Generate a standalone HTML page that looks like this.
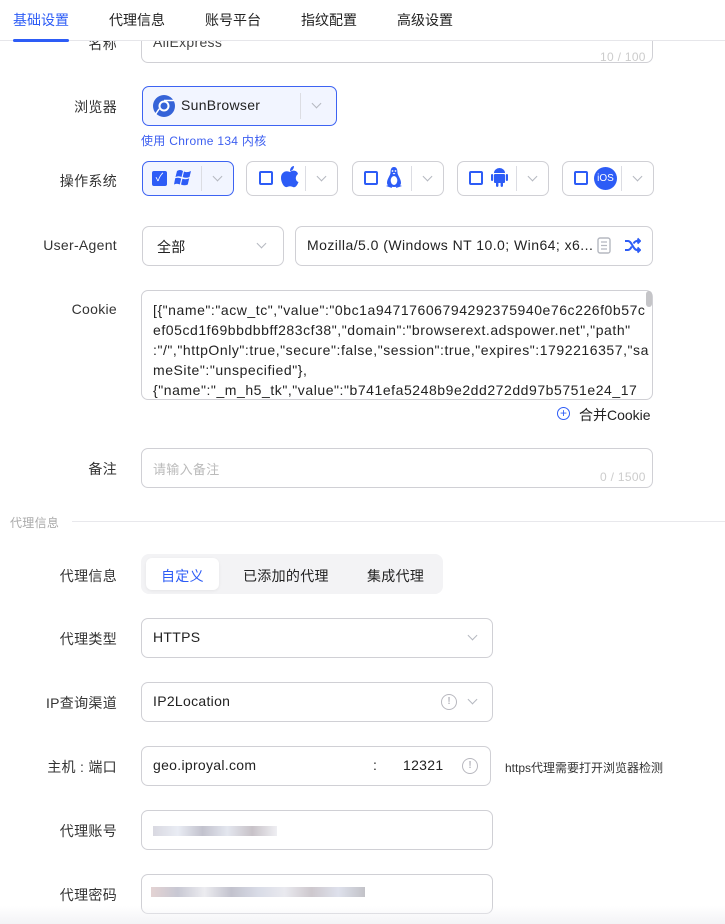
<!DOCTYPE html>
<html><head><meta charset="utf-8"><style>
*{box-sizing:border-box;margin:0;padding:0}
body{width:725px;height:924px;overflow:hidden;background:#fff;font-family:"Liberation Sans","Noto Sans CJK SC",sans-serif;font-size:14px;color:#222;position:relative;letter-spacing:0.3px}
.abs{position:absolute}
.box{position:absolute;border:1px solid #d0d0d5;border-radius:7px;background:#fff}
.lbl{position:absolute;right:608px;font-size:14px;color:#333;white-space:nowrap}
.chev{position:absolute;width:7px;height:7px;border-right:1.3px solid #b5b8c0;border-bottom:1.3px solid #b5b8c0;transform:rotate(45deg)}
.cb{position:absolute;width:14px;height:14px;border:2px solid #2d5cf6;border-radius:2px}
.div{position:absolute;width:1px;background:#dcdde3}
.tab{position:absolute;top:10px;font-size:14px;color:#222;letter-spacing:0}
.warn{position:absolute;width:16px;height:16px;border:1.5px solid #b8b8bf;border-radius:50%;font-size:10px;color:#b8b8bf;text-align:center;line-height:13px;font-weight:bold;letter-spacing:0}
</style></head><body>

<div class="box" style="left:141px;top:20px;width:512px;height:43px"></div>
<div class="abs" style="left:153px;top:34px;color:#444">AliExpress</div>
<div class="abs" style="left:600px;top:50px;font-size:12px;color:#ccc">10 / 100</div>
<div class="lbl" style="top:34px">名称</div>

<div class="abs" style="left:0;top:0;width:725px;height:41px;background:#fff;border-bottom:1px solid #e6e6ea"></div>
<div class="tab" style="left:13px;color:#2d5cf6">基础设置</div>
<div class="tab" style="left:109px">代理信息</div>
<div class="tab" style="left:205px">账号平台</div>
<div class="tab" style="left:301px">指纹配置</div>
<div class="tab" style="left:397px">高级设置</div>
<div class="abs" style="left:13px;top:39px;width:56px;height:3px;background:#2d5cf6;border-radius:2px"></div>

<div class="lbl" style="top:97px">浏览器</div>
<div class="box" style="left:142px;top:86px;width:195px;height:40px;background:#f2f5ff;border-color:#3d63f2"></div>
<svg class="abs" style="left:152px;top:94px" width="24" height="24" viewBox="0 0 24 24"><circle cx="12" cy="12" r="11" fill="#3563d8"/><circle cx="12" cy="12" r="5.5" fill="#fff"/><circle cx="12" cy="12" r="3.5" fill="#3563d8"/><path d="M12 6.5 L22 6.5" stroke="#fff" stroke-width="1.5"/><path d="M7.2 14.8 L3 21" stroke="#fff" stroke-width="1.5"/></svg>
<div class="abs" style="left:181px;top:97px;color:#222">SunBrowser</div>
<div class="div" style="left:300px;top:93px;height:26px"></div>
<div class="chev" style="left:313px;top:100px"></div>
<div class="abs" style="left:141px;top:132px;font-size:12px;color:#3d5ff0">使用 Chrome 134 内核</div>

<div class="lbl" style="top:171px">操作系统</div>
<div class="box" style="left:142px;top:161px;width:92px;height:35px;background:#f2f5ff;border-color:#3d63f2"></div>
<div class="abs" style="left:152px;top:171px;width:15px;height:15px;background:#2d5cf6;border-radius:2px;color:#fff;font-size:11px;text-align:center;line-height:15px">✓</div>
<svg class="abs" style="left:174px;top:169px" width="19" height="18" viewBox="0 0 19 18"><path d="M3 2 Q6 0 9 2 L7.5 8 Q4.5 6.5 1.5 8Z M10 2.5 Q13 4 17 2 L15.5 8 Q12 9.5 8.7 8Z M1.2 9.3 Q4.3 8 7.2 9.5 L5.8 15.5 Q2.8 14 0 15.5Z M8.4 9.7 Q12 11 15.2 9.3 L13.8 15.5 Q10.6 17 7 15.5Z" fill="#2d5cf6"/></svg>
<div class="div" style="left:201px;top:166px;height:25px"></div>
<div class="chev" style="left:214px;top:173px"></div>

<div class="box" style="left:246px;top:161px;width:92px;height:35px"></div>
<div class="cb" style="left:259px;top:171px"></div>
<svg class="abs" style="left:281px;top:166px" width="18" height="22" viewBox="0 0 18 22"><path d="M9 6 C11 4 16 4 17 8 C14 10 14 15 17.5 16 C16 20 14 22 12 21 C10 20 8 20 6 21 C3 22 0 16 0 12 C0 6 5 4 9 6Z M9 5 C9 2 11 0 13 0 C13 3 11 5 9 5Z" fill="#2d5cf6"/></svg>
<div class="div" style="left:305px;top:166px;height:25px"></div>
<div class="chev" style="left:318px;top:173px"></div>

<div class="box" style="left:352px;top:161px;width:92px;height:35px"></div>
<div class="cb" style="left:364px;top:171px"></div>
<svg class="abs" style="left:386px;top:167px" width="16" height="21" viewBox="0 0 16 21"><path d="M8 0 C11 0 11.5 3 11.5 6 C12 9 15 12 15 16 C15 18 13 20 8 20 C3 20 1 18 1 16 C1 12 4 9 4.5 6 C4.5 3 5 0 8 0Z" fill="#2d5cf6"/><ellipse cx="8" cy="13.5" rx="3.3" ry="4.5" fill="#fff"/><circle cx="6.5" cy="4" r="0.9" fill="#fff"/><circle cx="9.5" cy="4" r="0.9" fill="#fff"/><path d="M6.5 6 L9.5 6 L8 7.5Z" fill="#fff"/><path d="M0 19 L5 17 L6 21 Z M16 19 L11 17 L10 21Z" fill="#2d5cf6"/></svg>
<div class="div" style="left:411px;top:166px;height:25px"></div>
<div class="chev" style="left:424px;top:173px"></div>

<div class="box" style="left:457px;top:161px;width:92px;height:35px"></div>
<div class="cb" style="left:469px;top:171px"></div>
<svg class="abs" style="left:491px;top:167px" width="17" height="20" viewBox="0 0 17 20"><path d="M3 6 A5.5 5 0 0 1 14 6Z" fill="#2d5cf6"/><rect x="3" y="7" width="11" height="9" rx="1" fill="#2d5cf6"/><rect x="0" y="7" width="2.2" height="7" rx="1.1" fill="#2d5cf6"/><rect x="14.8" y="7" width="2.2" height="7" rx="1.1" fill="#2d5cf6"/><rect x="5" y="15" width="2.4" height="5" rx="1.2" fill="#2d5cf6"/><rect x="9.6" y="15" width="2.4" height="5" rx="1.2" fill="#2d5cf6"/></svg>
<div class="div" style="left:516px;top:166px;height:25px"></div>
<div class="chev" style="left:529px;top:173px"></div>

<div class="box" style="left:562px;top:161px;width:92px;height:35px"></div>
<div class="cb" style="left:574px;top:171px"></div>
<div class="abs" style="left:594px;top:167px;width:23px;height:23px;border-radius:50%;background:#2d5cf6;color:#fff;font-size:10px;text-align:center;line-height:23px;letter-spacing:0">iOS</div>
<div class="div" style="left:621px;top:166px;height:25px"></div>
<div class="chev" style="left:634px;top:173px"></div>

<div class="lbl" style="top:237px">User-Agent</div>
<div class="box" style="left:142px;top:226px;width:142px;height:40px"></div>
<div class="abs" style="left:157px;top:237px">全部</div>
<div class="chev" style="left:258px;top:240px"></div>
<div class="box" style="left:295px;top:226px;width:358px;height:40px"></div>
<div class="abs" style="left:307px;top:237px;color:#222;white-space:nowrap;letter-spacing:0.45px">Mozilla/5.0 (Windows NT 10.0; Win64; x6...</div>
<svg class="abs" style="left:597px;top:237px" width="14" height="17" viewBox="0 0 14 17"><rect x="1" y="1" width="12" height="15" rx="2" fill="none" stroke="#b5b8c0" stroke-width="1.4"/><path d="M4 5H10M4 8.5H10M4 12H10" stroke="#b5b8c0" stroke-width="1.3"/></svg>
<svg class="abs" style="left:624px;top:237px" width="17" height="17" viewBox="0 0 17 17"><path d="M1 4H4C8 4 9 13 13 13H16M1 13H4C6 13 7 11 7.8 9.5M9.5 6.5C10.5 5 11.5 4 13 4H16M13.5 1.5L16 4L13.5 6.5M13.5 10.5L16 13L13.5 15.5" fill="none" stroke="#2d5cf6" stroke-width="2"/></svg>

<div class="lbl" style="top:301px">Cookie</div>
<div class="box" style="left:141px;top:290px;width:512px;height:110px;overflow:hidden"></div>
<div class="abs" style="left:153px;top:300px;width:499px;height:98px;overflow:hidden;line-height:20px;font-size:14px;color:#222;white-space:nowrap;letter-spacing:0.55px">[{"name":"acw_tc","value":"0bc1a94717606794292375940e76c226f0b57c<br>ef05cd1f69bbdbbff283cf38","domain":"browserext.adspower.net","path"<br>:"/","httpOnly":true,"secure":false,"session":true,"expires":1792216357,"sa<br>meSite":"unspecified"},<br>{"name":"_m_h5_tk","value":"b741efa5248b9e2dd272dd97b5751e24_17</div>
<div class="abs" style="left:646px;top:291px;width:6px;height:16px;background:#c5c5c8;border-radius:3px"></div>
<div class="abs" style="left:557px;top:407px;width:13px;height:13px;border:1.3px solid #2d5cf6;border-radius:50%;color:#2d5cf6;font-size:12px;line-height:10px;text-align:center;letter-spacing:0">+</div>
<div class="abs" style="left:579px;top:405px;color:#222;letter-spacing:0">合并Cookie</div>

<div class="lbl" style="top:459px">备注</div>
<div class="box" style="left:141px;top:448px;width:512px;height:40px"></div>
<div class="abs" style="left:153px;top:459px;font-size:13px;color:#bbb">请输入备注</div>
<div class="abs" style="left:600px;top:470px;font-size:12px;color:#ccc">0 / 1500</div>

<div class="abs" style="left:10px;top:514px;font-size:12px;color:#aaa">代理信息</div>
<div class="abs" style="left:72px;top:521px;width:653px;height:1px;background:#e8e8ec"></div>

<div class="lbl" style="top:566px">代理信息</div>
<div class="abs" style="left:141px;top:554px;width:302px;height:40px;background:#f3f3f5;border-radius:8px"></div>
<div class="abs" style="left:146px;top:558px;width:73px;height:32px;background:#fff;border-radius:6px;box-shadow:0 1px 3px rgba(0,0,0,0.06)"></div>
<div class="abs" style="left:161px;top:566px;color:#2d5cf6">自定义</div>
<div class="abs" style="left:243px;top:566px">已添加的代理</div>
<div class="abs" style="left:367px;top:566px">集成代理</div>

<div class="lbl" style="top:629px">代理类型</div>
<div class="box" style="left:141px;top:618px;width:352px;height:40px"></div>
<div class="abs" style="left:153px;top:629px">HTTPS</div>
<div class="chev" style="left:469px;top:632px"></div>

<div class="lbl" style="top:693px">IP查询渠道</div>
<div class="box" style="left:141px;top:682px;width:352px;height:40px"></div>
<div class="abs" style="left:153px;top:693px">IP2Location</div>
<div class="warn" style="left:441px;top:694px">!</div>
<div class="chev" style="left:469px;top:696px"></div>

<div class="lbl" style="top:757px">主机 : 端口</div>
<div class="box" style="left:141px;top:746px;width:350px;height:40px"></div>
<div class="abs" style="left:153px;top:757px">geo.iproyal.com</div>
<div class="abs" style="left:373px;top:757px">:</div>
<div class="abs" style="left:403px;top:757px">12321</div>
<div class="warn" style="left:462px;top:758px">!</div>
<div class="abs" style="left:505px;top:759px;font-size:12px;color:#333;letter-spacing:0">https代理需要打开浏览器检测</div>

<div class="lbl" style="top:821px">代理账号</div>
<div class="box" style="left:141px;top:810px;width:352px;height:40px"></div>
<div class="abs" style="left:153px;top:826px;width:124px;height:10px;background:linear-gradient(90deg,#c8c8d4,#e0e4ef,#a8a8b8,#d8dce8,#b0a8b0,#e8e8ee);opacity:.7"></div>

<div class="lbl" style="top:885px">代理密码</div>
<div class="box" style="left:141px;top:874px;width:352px;height:40px"></div>
<div class="abs" style="left:151px;top:887px;width:214px;height:10px;background:linear-gradient(90deg,#d8c0c0,#b0b0c0,#e4e4ea,#a8a8b8,#c8ccdc,#e0e0e8,#b8b0b8,#d0d4e4,#a8a8b0);opacity:.7"></div>

<div class="abs" style="left:0;top:906px;width:725px;height:18px;background:linear-gradient(#fff0,#f3f3f6)"></div>
</body></html>
